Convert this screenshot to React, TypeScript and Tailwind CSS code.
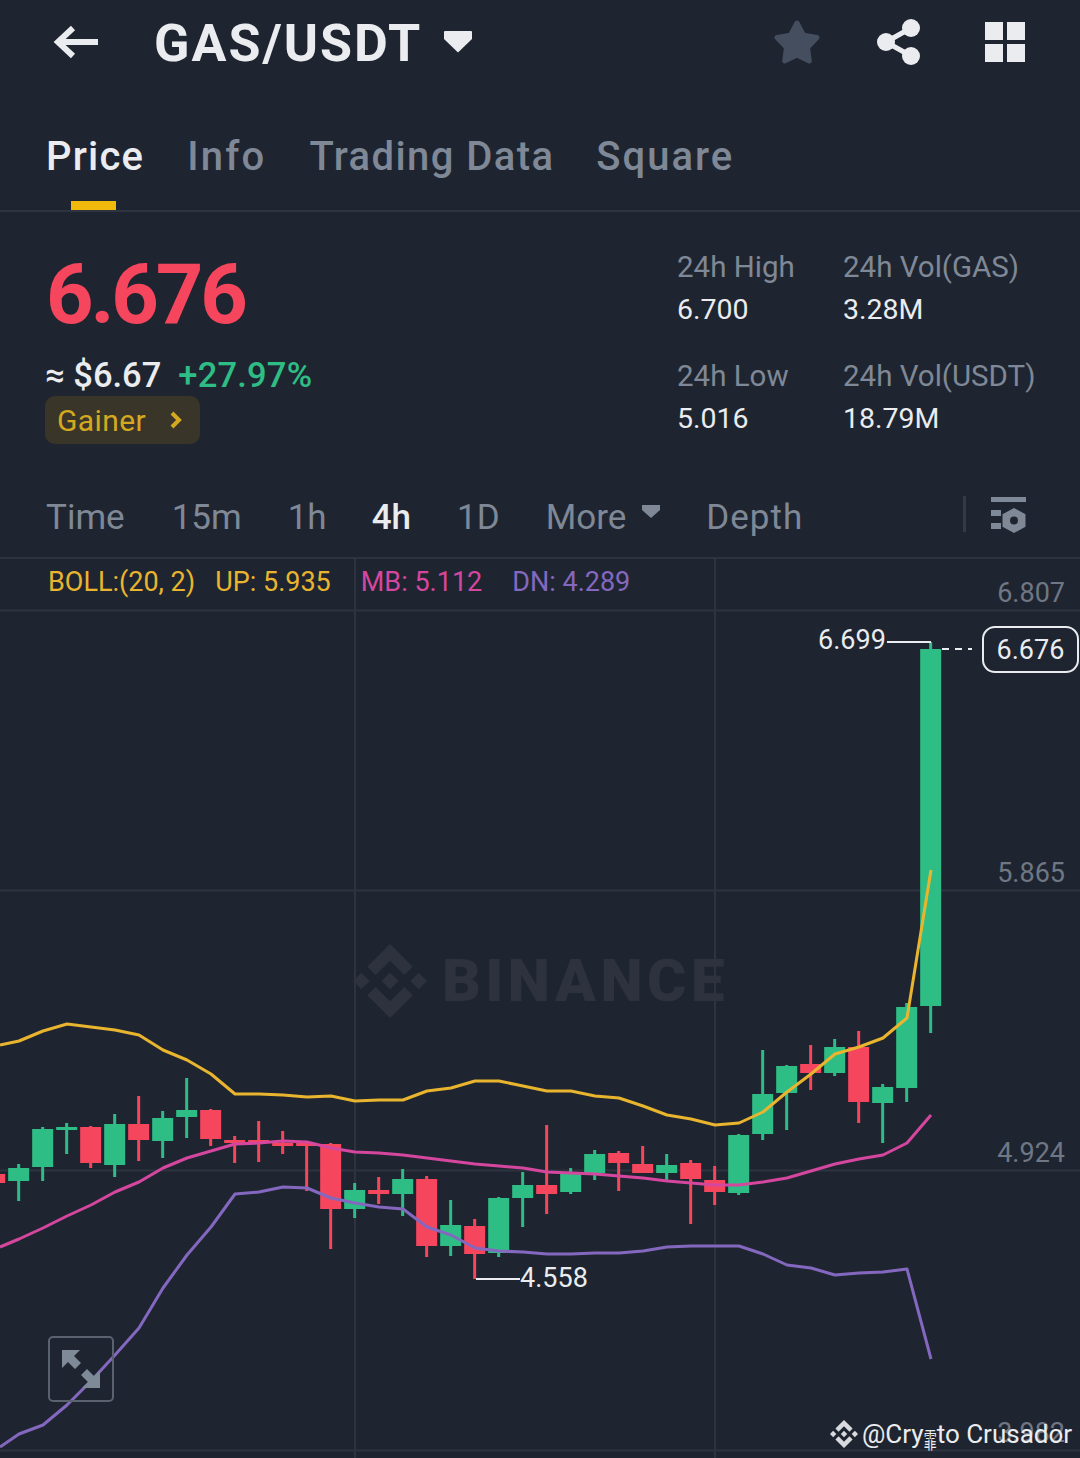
import { Fragment } from 'react';

type Candle = [boolean, number, number, number, number];

// up, wick top, body top, body bottom, wick bottom (page y)
const candles: Candle[] = [
  [false, 1174, 1174, 1183, 1183],
  [true, 1164, 1168, 1181, 1201],
  [true, 1127, 1129, 1167, 1181],
  [true, 1123, 1127, 1130, 1154],
  [false, 1126, 1127, 1163, 1168],
  [true, 1114, 1124, 1165, 1177],
  [false, 1096, 1124, 1140, 1161],
  [true, 1111, 1118, 1141, 1158],
  [true, 1078, 1110, 1117, 1138],
  [false, 1109, 1110, 1139, 1146],
  [false, 1136, 1140, 1143, 1163],
  [false, 1121, 1140, 1143, 1162],
  [false, 1131, 1143, 1146, 1154],
  [false, 1143, 1143, 1146, 1191],
  [false, 1143, 1144, 1209, 1249],
  [true, 1183, 1190, 1209, 1218],
  [false, 1177, 1190, 1194, 1204],
  [true, 1169, 1179, 1194, 1216],
  [false, 1176, 1179, 1246, 1257],
  [true, 1200, 1225, 1246, 1256],
  [false, 1219, 1226, 1254, 1279],
  [true, 1197, 1198, 1253, 1257],
  [true, 1172, 1185, 1198, 1227],
  [false, 1125, 1185, 1194, 1214],
  [true, 1168, 1173, 1192, 1194],
  [true, 1150, 1154, 1173, 1180],
  [false, 1151, 1153, 1163, 1191],
  [false, 1146, 1164, 1173, 1173],
  [true, 1154, 1165, 1173, 1181],
  [false, 1160, 1163, 1179, 1224],
  [false, 1166, 1180, 1192, 1205],
  [true, 1134, 1135, 1193, 1195],
  [true, 1050, 1094, 1134, 1140],
  [true, 1065, 1066, 1093, 1130],
  [false, 1045, 1064, 1073, 1090],
  [true, 1039, 1047, 1073, 1076],
  [false, 1031, 1047, 1102, 1123],
  [true, 1084, 1087, 1103, 1143],
  [true, 1003, 1007, 1088, 1102],
  [true, 642, 649, 1006, 1033],
];

const upper =
  '0,1045 19,1041 43,1031 67,1024 91,1027 115,1030 139,1035 163,1050 187,1060 211,1074 235,1094 259,1094 283,1095 307,1097 331,1096 355,1101 379,1100 403,1100 427,1091 451,1088 475,1081 499,1081 523,1086 547,1091 571,1091 595,1096 619,1098 643,1106 667,1115 691,1119 715,1125 739,1123 763,1112 787,1092 811,1074 835,1054 859,1047 883,1038 907,1018 931,870';
const middle =
  '0,1247 19,1239 43,1228 67,1216 91,1205 115,1192 139,1182 163,1168 187,1158 211,1151 235,1144 259,1143 283,1141 307,1142 331,1148 355,1152 379,1153 403,1155 427,1158 451,1161 475,1164 499,1166 523,1168 547,1172 571,1173 595,1174 619,1176 643,1178 667,1181 691,1183 715,1185 739,1185 763,1182 787,1178 811,1171 835,1164 859,1159 883,1155 907,1143 931,1115';
const lower =
  '0,1447 19,1434 43,1425 67,1405 91,1381 115,1355 139,1328 163,1288 187,1255 211,1227 235,1194 259,1192 283,1187 307,1188 331,1198 355,1203 379,1207 403,1209 427,1227 451,1235 475,1248 499,1251 523,1252 547,1254 571,1254 595,1253 619,1253 643,1251 667,1247 691,1246 715,1246 739,1246 763,1254 787,1265 811,1268 835,1275 859,1273 883,1272 907,1269 931,1359';

function BinanceLogo({ className }: { className?: string }) {
  return (
    <svg viewBox="0 0 126.61 126.61" className={className} fill="currentColor">
      <path d="M38.73 53.2l24.59-24.58 24.6 24.6 14.3-14.31L63.32 0 24.43 38.9zM0 63.31l14.3-14.31 14.31 14.31-14.31 14.3zM38.73 73.41l24.59 24.59 24.6-24.6 14.31 14.29-38.9 38.91-38.91-38.9zM98 63.31l14.3-14.31 14.31 14.3-14.31 14.32z" />
      <path d="M77.83 63.3L63.32 48.78 52.59 59.51l-1.24 1.23-2.54 2.54 14.51 14.5 14.51-14.47z" />
    </svg>
  );
}

function Header() {
  return (
    <div className="flex h-[88px] items-center">
      <svg viewBox="0 0 46 36" className="mb-[4px] ml-[52px] h-[36px] w-[46px]" fill="none" stroke="#eaecef" strokeWidth="6">
        <path d="M46 18H6" />
        <path d="M21 4L6 18l15 14" />
      </svg>
      <span className="ml-[56px] text-[52px] leading-none font-bold tracking-[2px] text-[#eaecef]">GAS/USDT</span>
      <svg viewBox="0 0 28 22" className="mb-[5px] ml-[22px] h-[22px] w-[28px]" fill="#eaecef">
        <path d="M1 0h26a1 1 0 0 1 1 1v7L14 21.5 0 8V1a1 1 0 0 1 1-1z" />
      </svg>
      <svg viewBox="0 0 46 46" className="mb-[4px] ml-auto h-[46px] w-[46px]" fill="#454e5e" stroke="#454e5e" strokeWidth="5" strokeLinejoin="round">
        <path d="M23 4l6.500 12.100 13.500 2.400-9.500 9.900L35.300 42 23 36l-12.300 6 1.800-13.600L3 18.500l13.500-2.400z" />
      </svg>
      <svg viewBox="0 0 44 46" className="mb-[4px] ml-[57px] h-[46px] w-[44px]" fill="#eaecef">
        <circle cx="9" cy="23" r="9" />
        <circle cx="34" cy="9" r="9" />
        <circle cx="34" cy="37" r="9" />
        <path d="M9 23L34 9M9 23l25 14" stroke="#eaecef" strokeWidth="5" />
      </svg>
      <div className="mr-[55px] mb-[4px] ml-[64px] grid h-[40px] w-[40px] grid-cols-2 gap-[4px]">
        <div className="bg-[#eaecef]" />
        <div className="bg-[#eaecef]" />
        <div className="bg-[#eaecef]" />
        <div className="bg-[#eaecef]" />
      </div>
    </div>
  );
}

function Tabs() {
  return (
    <div className="flex h-[124px] border-b-2 border-[#2d333f] pt-[46px] pl-[46px] text-[40px] leading-[46px] font-medium tracking-[1.200px] text-[#7f8896]">
      <div className="relative h-[77px] text-[#eaecef]">
        Price
        <div className="absolute top-[67px] left-[25px] h-[9px] w-[45px] bg-[#f0b90b]" />
      </div>
      <div className="ml-[43px] tracking-[2.200px]">Info</div>
      <div className="ml-[43px] tracking-[1.400px]">Trading Data</div>
      <div className="ml-[42px] tracking-[2px]">Square</div>
    </div>
  );
}

function StatCell({ label, value, className }: { label: string; value: string; className?: string }) {
  return (
    <div className={className}>
      <div className="text-[29.500px] leading-[36px] text-[#7f8896]">{label}</div>
      <div className="mt-[7px] text-[28.500px] leading-[36px] text-[#eaecef]">{value}</div>
    </div>
  );
}

function Stats() {
  return (
    <div className="flex h-[265px]">
      <div className="pt-[38px] pl-[45px]">
        <div className="pl-[1px] text-[83px] leading-[90px] font-bold tracking-[-3.200px] text-[#f6465d]">6.676</div>
        <div className="mt-[14px] flex text-[34.500px] leading-[42px] font-medium">
          <span className="text-[#eaecef]">≈ $6.67</span>
          <span className="ml-[17px] tracking-[0.200px] text-[#2ebd85]">+27.97%</span>
        </div>
        <div className="flex h-[48px] w-[155px] items-center rounded-[10px] bg-[#3a3529] pl-[12px] text-[30px] tracking-[0.400px] text-[#d4a91f]">
          Gainer
          <svg viewBox="0 0 12 18" className="ml-[24px] h-[18px] w-[12px]" fill="none" stroke="#d4a91f" strokeWidth="4">
            <path d="M2 2l7 7-7 7" />
          </svg>
        </div>
      </div>
      <div className="ml-auto grid h-fit grid-cols-[166px_237px] gap-y-[30px] pt-[37px]">
        <StatCell label="24h High" value="6.700" />
        <StatCell label="24h Vol(GAS)" value="3.28M" />
        <StatCell label="24h Low" value="5.016" />
        <StatCell label="24h Vol(USDT)" value="18.79M" />
      </div>
    </div>
  );
}

function Intervals() {
  return (
    <div className="flex h-[82px] items-center border-b-2 border-[#2d333f] pt-[2px] pl-[46px] text-[35px] text-[#7f8896]">
      <span>Time</span>
      <span className="ml-[47px]">15m</span>
      <span className="ml-[46px]">1h</span>
      <span className="ml-[45px] font-medium text-[#eaecef]">4h</span>
      <span className="ml-[46px]">1D</span>
      <span className="ml-[46px]">More</span>
      <svg viewBox="0 0 18 13" className="mb-[14px] ml-[16px] h-[13px] w-[18px]" fill="#7f8896">
        <path d="M0 0h18v5L9 13 0 5z" />
      </svg>
      <span className="ml-[46px] tracking-[1px]">Depth</span>
      <div className="mb-[9px] ml-auto h-[36px] w-[3px] bg-[#343a46]" />
      <svg viewBox="0 0 36 36" className="mr-[54px] mb-[6px] ml-[24px] h-[36px] w-[36px]" fill="#7f8896">
        <path d="M1 0h35v5H1zM1 13h10v6H1zM1 26h10v6H1z" />
        <path fillRule="evenodd" d="M24 11l11.500 6.200v12.600L24 36l-11.500-6.200V17.200zm0 8.500a4 4 0 1 0 0 8 4 4 0 0 0 0-8z" />
      </svg>
    </div>
  );
}

function Chart() {
  return (
    <div className="relative flex-1 overflow-hidden">
      <svg viewBox="0 559 1080 899" className="absolute inset-0 h-full w-full">
        <g stroke="#2d333f" strokeWidth="2">
          <path d="M0 610.500H1080M0 890.500H1080M0 1170.500H1080M0 1450.500H1080" />
          <path d="M355 559V1458M715 559V1458" />
        </g>
        {candles.map(([up, wickTop, top, bottom, wickBottom], i) => {
          const x = -5.33 + 24 * i;
          const color = up ? '#2ebd85' : '#f6465d';
          return (
            <Fragment key={i}>
              <rect x={x - 1.5} y={wickTop} width={3} height={wickBottom - wickTop} fill={color} />
              <rect x={x - 10.5} y={top} width={21} height={bottom - top} fill={color} />
            </Fragment>
          );
        })}
        <g fill="none" strokeWidth="3" strokeLinejoin="round">
          <polyline points={upper} stroke="#e9b52f" />
          <polyline points={middle} stroke="#d5479f" />
          <polyline points={lower} stroke="#8468c0" />
        </g>
        <g stroke="#eaecef" strokeWidth="2" fill="none">
          <path d="M887 642H931" />
          <path d="M476 1279H520" />
          <path d="M942 649H972" strokeDasharray="7 6" />
        </g>
      </svg>

      <div className="absolute top-[385px] left-[353px] flex items-center text-[#2d323e]">
        <BinanceLogo className="h-[74px] w-[74px]" />
        <span className="ml-[15px] text-[60px] leading-none font-black tracking-[4.500px]">BINANCE</span>
      </div>

      <div className="flex h-[47px] items-center pl-[48px] text-[27px] leading-none">
        <span className="text-[#e9b52f]">BOLL:(20, 2)</span>
        <span className="ml-[20px] text-[#e9b52f]">UP: 5.935</span>
        <span className="ml-[30px] text-[#d5479f]">MB: 5.112</span>
        <span className="ml-[30px] text-[#8468c0]">DN: 4.289</span>
      </div>

      <div className="absolute top-[18px] right-[15px] text-[27px] leading-[32px] text-[#6f7785]">6.807</div>
      <div className="absolute top-[298px] right-[15px] text-[27px] leading-[32px] text-[#6f7785]">5.865</div>
      <div className="absolute top-[578px] right-[15px] text-[27px] leading-[32px] text-[#6f7785]">4.924</div>
      <div className="absolute top-[858px] right-[15px] text-[27px] leading-[32px] text-[#6f7785]">3.982</div>

      <div className="absolute top-[65px] left-[818px] text-[27px] leading-[32px] text-[#eaecef]">6.699</div>
      <div className="absolute top-[703px] left-[520px] text-[27px] leading-[32px] text-[#eaecef]">4.558</div>
      <div className="absolute top-[67px] left-[982px] flex h-[47px] w-[97px] items-center justify-center rounded-[13px] border-2 border-[#eaecef] pt-[1px] text-[27px] text-[#eaecef]">
        6.676
      </div>

      <div className="absolute top-[777px] left-[48px] flex h-[66px] w-[66px] items-center justify-center rounded-[5px] border-2 border-[#5a6270]">
        <svg viewBox="0 0 38 38" className="h-[38px] w-[38px]" fill="#7f8a99">
          <path d="M0 0h18L12 6l7 7-6 6-7-7-6 6zM38 38H20l6-6-7-7 6-6 7 7 6-6z" />
        </svg>
      </div>

      <div className="absolute top-[859px] left-[830px] flex items-center text-[#eaecef]">
        <BinanceLogo className="h-[28px] w-[28px] text-[#d8dade]" />
        <span className="ml-[4px] text-[26px] leading-[32px]">
          @Cry
          <span className="inline-block w-[13px] translate-y-[2px] scale-y-[1.700] align-middle font-['Noto_Sans_CJK_SC'] text-[13px] leading-[13px]">霏</span>
          to Crusador
        </span>
      </div>
    </div>
  );
}

export default function App() {
  return (
    <div className="flex h-[1458px] w-[1080px] flex-col overflow-hidden bg-[#1f2530] font-['Roboto','Noto_Sans',sans-serif]">
      <Header />
      <Tabs />
      <Stats />
      <Intervals />
      <Chart />
    </div>
  );
}
